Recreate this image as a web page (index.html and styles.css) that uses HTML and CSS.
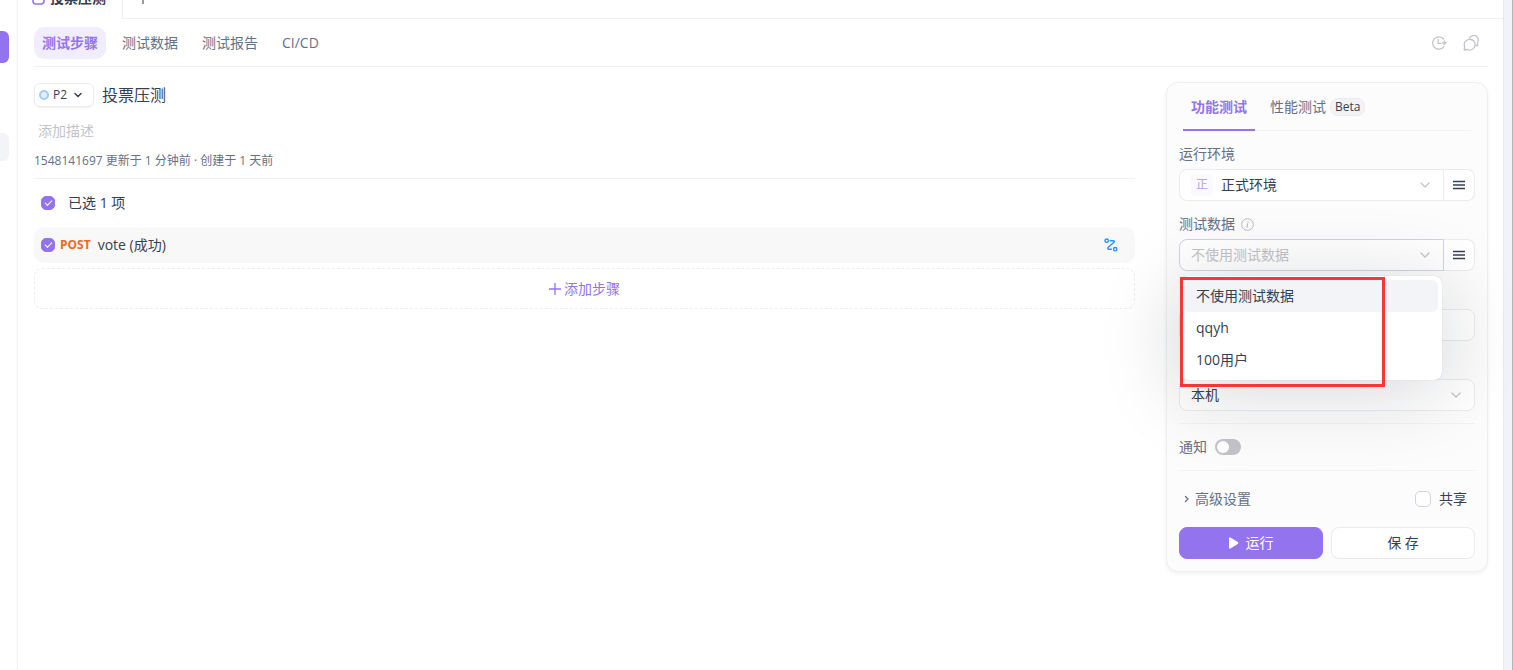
FILE: index.html
```html
<!DOCTYPE html>
<html lang="zh-CN">
<head>
    <meta charset="UTF-8">
    <meta name="viewport" content="width=device-width, initial-scale=1.0">
    <title>投票压测</title>
    <link rel="stylesheet" href="styles.css">
</head>
<body>
    <div class="app">
        <aside class="rail">
            <div class="rail-item active"></div>
            <div class="rail-item"></div>
        </aside>

        <div class="main">
            <div class="tabbar">
                <div class="file-tab">
                    <svg width="13" height="13" viewBox="0 0 13 13" fill="none" stroke="#9373ee" stroke-width="1.6"><rect x="1" y="1" width="11" height="11" rx="3"/></svg>
                    <span>投票压测</span>
                </div>
                <button class="new-tab" aria-label="新建">
                    <svg width="14" height="14" viewBox="0 0 14 14" stroke="#667085" stroke-width="1.4"><path d="M7 1v12M1 7h12"/></svg>
                </button>
            </div>

            <div class="content">
                <nav class="nav">
                    <a class="nav-link active" href="#steps">测试步骤</a>
                    <a class="nav-link" href="#data">测试数据</a>
                    <a class="nav-link" href="#report">测试报告</a>
                    <a class="nav-link" href="#cicd">CI/CD</a>
                    <div class="nav-tools">
                        <button class="icon-btn" aria-label="历史">
                            <svg width="16" height="16" viewBox="0 0 16 16" fill="none" stroke="#c3c4c9" stroke-width="1.3" stroke-linecap="round"><path d="M12.6 4A6.2 6.2 0 1 0 12.8 11.8"/><path d="M7.2 4.4v4h2.8"/><path d="M11.6 7.4h3.8l-1.9 2.4z" fill="#c3c4c9" stroke-width=".8" stroke-linejoin="round"/><path d="M13.5 6v1.6"/></svg>
                        </button>
                        <button class="icon-btn" aria-label="评论">
                            <svg width="16" height="16" viewBox="0 0 16 16" fill="none" stroke="#c3c4c9" stroke-width="1.3" stroke-linejoin="round" stroke-linecap="round"><path d="M1.2 15l.5-3.3a5.4 5.4 0 1 1 2.6 2.8z"/><path d="M6.6 3a4.6 4.6 0 1 1 7.8 4.8l.3 3-2.4-.4"/></svg>
                        </button>
                    </div>
                </nav>

                <div class="columns">
                    <section class="steps">
                        <div class="title-row">
                            <label class="priority">
                                <span class="priority-dot"></span>
                                <select aria-label="优先级"><option>P2</option></select>
                                <svg width="8" height="8" viewBox="0 0 8 8" fill="none" stroke="#344054" stroke-width="1.5" stroke-linecap="round" stroke-linejoin="round"><path d="M1 2.5l3 3 3-3"/></svg>
                            </label>
                            <h1>投票压测</h1>
                        </div>
                        <input class="desc" type="text" placeholder="添加描述" aria-label="描述">
                        <p class="meta">1548141697 更新于 1 分钟前 · 创建于 1 天前</p>

                        <label class="select-all">
                            <input class="check" type="checkbox" checked>
                            <span>已选 1 项</span>
                        </label>
                        <div class="step">
                            <input class="check" id="step1" type="checkbox" checked>
                            <span class="method">POST</span>
                            <label class="step-name" for="step1">vote (成功)</label>
                            <svg class="step-link" width="14" height="14" viewBox="0 0 14 14" fill="none" stroke="#2e90fa" stroke-width="1.4" stroke-linecap="round" stroke-linejoin="round"><circle cx="2.7" cy="2.7" r="1.7"/><circle cx="11.2" cy="11.2" r="1.7"/><path d="M6.2 2.7h3.2a.9.9 0 0 1 .6 1.6L4 9.6a.9.9 0 0 0 .6 1.6h2.8"/></svg>
                        </div>
                        <button class="add-step">
                            <svg width="12" height="12" viewBox="0 0 12 12" stroke="#9373ee" stroke-width="1.3"><path d="M6 0v12M0 6h12"/></svg>
                            <span>添加步骤</span>
                        </button>
                    </section>

                    <aside class="panel">
                        <div class="panel-tabs">
                            <button class="panel-tab active">功能测试</button>
                            <button class="panel-tab">性能测试<span class="beta">Beta</span></button>
                        </div>

                        <div class="field">
                            <label for="env">运行环境</label>
                            <div class="group">
                                <div class="picker">
                                    <span class="env-mark">正</span>
                                    <select id="env"><option>正式环境</option></select>
                                    <svg class="arrow" width="10" height="10" viewBox="0 0 10 10"><path d="M1 3l4 4 4-4"/></svg>
                                </div>
                                <button class="menu-btn" aria-label="管理环境">
                                    <svg width="12" height="10" viewBox="0 0 12 10" stroke="#344054" stroke-width="1.3"><path d="M0 1.5h12M0 5h12M0 8.5h12"/></svg>
                                </button>
                            </div>
                        </div>

                        <div class="field">
                            <label for="dataset">测试数据
                                <svg width="13" height="13" viewBox="0 0 13 13" fill="none" stroke="#b9bbc1"><circle cx="6.5" cy="6.5" r="5.8"/><path d="M6.6 5.4L6 9.6M7 3.2v1.2" stroke-width="1.2"/></svg>
                            </label>
                            <div class="group">
                                <div class="picker open">
                                    <select id="dataset"><option>不使用测试数据</option></select>
                                    <svg class="arrow" width="10" height="10" viewBox="0 0 10 10"><path d="M1 3l4 4 4-4"/></svg>
                                </div>
                                <button class="menu-btn" aria-label="管理数据">
                                    <svg width="12" height="10" viewBox="0 0 12 10" stroke="#344054" stroke-width="1.3"><path d="M0 1.5h12M0 5h12M0 8.5h12"/></svg>
                                </button>
                                <ul class="dropdown" role="listbox" aria-label="测试数据">
                                    <li class="option active" role="option">不使用测试数据</li>
                                    <li class="option" role="option">qqyh</li>
                                    <li class="option" role="option">100用户</li>
                                </ul>
                                <div class="marker"></div>
                            </div>
                        </div>

                        <div class="field unlabeled">
                            <div class="group">
                                <div class="picker"><input type="text" aria-label="循环次数"></div>
                            </div>
                        </div>

                        <div class="field unlabeled">
                            <div class="group">
                                <div class="picker">
                                    <select aria-label="运行于"><option>本机</option></select>
                                    <svg class="arrow" width="10" height="10" viewBox="0 0 10 10"><path d="M1 3l4 4 4-4"/></svg>
                                </div>
                            </div>
                        </div>

                        <div class="notify">
                            <label for="notify">通知</label>
                            <input class="switch" id="notify" type="checkbox">
                        </div>

                        <div class="advanced">
                            <button class="advanced-toggle">
                                <svg width="8" height="8" viewBox="0 0 8 8" fill="none" stroke="#667085" stroke-width="1.4" stroke-linecap="round" stroke-linejoin="round"><path d="M2.5 1.5L5 4 2.5 6.5"/></svg>
                                <span>高级设置</span>
                            </button>
                            <label class="share"><input class="check" type="checkbox">共享</label>
                        </div>

                        <div class="actions">
                            <button class="btn primary">
                                <svg width="10" height="12" viewBox="0 0 10 12" fill="#fff"><path d="M0 1.2C0 .4.8.1 1.4.5l7.4 4.6c.7.4.7 1.4 0 1.8l-7.4 4.6C.8 11.9 0 11.6 0 10.8z"/></svg>
                                <span>运行</span>
                            </button>
                            <button class="btn">保 存</button>
                        </div>
                    </aside>
                </div>
            </div>
        </div>

        <div class="gutter"></div>
    </div>
</body>
</html>
```

FILE: styles.css
```css
* {
    box-sizing: border-box;
}
body {
    margin: 0;
    font: 14px/22px "Open Sans", "Noto Sans CJK SC", sans-serif;
    color: #344054;
    background: #fff;
}
button, input, select {
    font: inherit;
    color: inherit;
    margin: 0;
    padding: 0;
    border: none;
    background: none;
    outline: none;
}
button, select {
    cursor: pointer;
}
select {
    appearance: none;
}
svg {
    flex: none;
}
.app {
    display: flex;
    height: 100vh;
    overflow: hidden;
}

/* left rail */
.rail {
    flex: none;
    width: 18px;
    padding-top: 31px;
    border-right: 1px solid #f1f2f5;
}
.rail-item {
    width: 9px;
    height: 28px;
    border-radius: 0 6px 6px 0;
    background: #f2f4f7;
}
.rail-item.active {
    height: 32px;
    margin-bottom: 70px;
    background: #9373ee;
}

/* main area, scrolled a little under the window top */
.main {
    flex: 1;
    min-width: 0;
    margin-top: -23px;
}
.tabbar {
    display: flex;
    height: 42px;
}
.file-tab {
    display: flex;
    align-items: center;
    gap: 5px;
    width: 105px;
    padding-left: 14px;
    font-weight: 600;
    border-right: 1px solid #edeef2;
}
.new-tab {
    flex: 1;
    display: flex;
    align-items: center;
    padding-left: 13px;
    border-bottom: 1px solid #f1f2f5;
}
.content {
    padding: 0 15px 0 16px;
}
.nav {
    display: flex;
    align-items: center;
    gap: 8px;
    height: 48px;
    border-bottom: 1px solid #f1f2f5;
}
.nav-link {
    padding: 5px 8px;
    border-radius: 10px;
    color: #667085;
    text-decoration: none;
}
.nav-link.active {
    color: #9373ee;
    font-weight: 600;
    background: #f2edfd;
}
.nav-tools {
    display: flex;
    gap: 16px;
    margin-left: auto;
    padding-right: 9px;
}
.icon-btn {
    display: flex;
}
.columns {
    display: flex;
    align-items: flex-start;
    gap: 31px;
    padding-top: 15px;
}

/* steps */
.steps {
    flex: 1;
    min-width: 0;
}
.title-row {
    display: flex;
    align-items: center;
    gap: 8px;
    margin-top: 1px;
}
.priority {
    display: flex;
    align-items: center;
    width: 60px;
    height: 24px;
    padding-left: 4px;
    font-size: 12px;
    border: 1px solid #eaecf0;
    border-radius: 6px;
    box-shadow: 0 1px 2px rgba(16, 24, 40, 0.06);
}
.priority-dot {
    width: 10px;
    height: 10px;
    margin-right: 4px;
    border: 2px solid #a3cbfb;
    border-radius: 50%;
    background: #e3effd;
}
.priority select {
    width: 21px;
}
h1 {
    margin: 0;
    font-size: 16px;
    line-height: 24px;
    font-weight: 400;
}
.desc {
    display: block;
    width: 100%;
    height: 32px;
    margin-top: 7px;
    padding: 0 4px;
}
.desc::placeholder {
    color: #c3c4c9;
    opacity: 1;
}
.meta {
    margin: 0;
    padding: 5px 0 7px;
    font-size: 12px;
    line-height: 20px;
    color: #667085;
    border-bottom: 1px solid #f1f2f5;
}
.check {
    appearance: none;
    position: relative;
    flex: none;
    width: 14px;
    height: 14px;
    border: 1px solid #d0d5dd;
    border-radius: 5px;
    background: #fff;
}
.check:checked {
    border-color: #9373ee;
    background: #9373ee;
}
.check:checked::before {
    content: "";
    position: absolute;
    left: 3px;
    top: 3px;
    width: 6px;
    height: 3px;
    border: solid #fff;
    border-width: 0 0 1px 1px;
    transform: rotate(-45deg);
}
.select-all {
    display: flex;
    align-items: center;
    gap: 13px;
    height: 48px;
    padding-left: 7px;
}
.step {
    display: flex;
    align-items: center;
    height: 36px;
    padding: 0 17px 0 7px;
    border-radius: 10px;
    background: #f8f8f8;
}
.method {
    margin-left: 5px;
    font-size: 12px;
    font-weight: 700;
    color: #ef6820;
}
.step-name {
    margin-left: 7px;
}
.step-link {
    margin-left: auto;
}
.add-step {
    display: flex;
    align-items: center;
    justify-content: center;
    gap: 3px;
    width: 100%;
    height: 41px;
    margin-top: 5px;
    color: #9373ee;
    border: 1px dashed #eeeef0;
    border-radius: 8px;
}

/* run panel */
.panel {
    flex: none;
    width: 322px;
    padding: 0 12px 12px;
    border: 1px solid #eeeff2;
    border-radius: 12px;
    background: #fcfcfc;
    box-shadow: 0 2px 4px rgba(16, 24, 40, 0.05);
}
.panel-tabs {
    display: flex;
    gap: 7px;
    height: 48px;
    margin: 0 4px;
    box-shadow: inset 0 -1px #f1f2f5;
}
.panel-tab {
    display: flex;
    align-items: center;
    gap: 4px;
    padding: 2px 8px 0;
    color: #667085;
    border-bottom: 2px solid transparent;
}
.panel-tab.active {
    color: #9373ee;
    font-weight: 600;
    border-bottom-color: #9373ee;
}
.beta {
    padding: 0 4px;
    font-size: 12px;
    line-height: 16px;
    color: #344054;
    border: 1px solid #ebecef;
    border-radius: 8px;
    background: #f3f3f5;
}
.field label {
    display: flex;
    align-items: center;
    gap: 6px;
    padding: 12px 0 4px;
    color: #667085;
}
.field.unlabeled {
    padding-top: 38px;
}
.group {
    position: relative;
    display: flex;
    height: 32px;
}
.picker {
    flex: 1;
    min-width: 0;
    display: flex;
    align-items: center;
    padding: 0 13px 0 11px;
    border: 1px solid #eaebee;
    border-radius: 8px;
    background: #fff;
}
.picker:not(:last-child) {
    border-radius: 8px 0 0 8px;
}
.picker select, .picker input {
    flex: 1;
    min-width: 0;
    height: 30px;
}
.picker.open {
    border-color: #d0d5dd;
    color: #c3c4c9;
}
.arrow {
    fill: none;
    stroke: #c3c4c9;
    stroke-width: 1.3;
    stroke-linecap: round;
    stroke-linejoin: round;
}
.env-mark {
    width: 22px;
    margin-right: 8px;
    font-size: 12px;
    text-align: center;
    color: #b7a3f3;
    border-radius: 4px;
    background: #faf9fe;
}
.menu-btn {
    display: flex;
    align-items: center;
    justify-content: center;
    width: 31px;
    border: solid #eaebee;
    border-width: 1px 1px 1px 0;
    border-radius: 0 8px 8px 0;
    background: #fff;
}
.dropdown {
    position: absolute;
    z-index: 2;
    top: 37px;
    left: 1px;
    right: 33px;
    margin: 0;
    padding: 4px;
    list-style: none;
    border-radius: 8px;
    background: #fff;
    box-shadow: 0 0 1px rgba(16, 24, 40, 0.2), 0 10px 80px rgba(16, 24, 40, 0.18);
}
.option {
    padding: 5px 12px;
    border-radius: 6px;
}
.option.active {
    background: #f2f4f7;
}
.marker {
    position: absolute;
    z-index: 3;
    top: 38px;
    left: 1px;
    width: 205px;
    height: 110px;
    border: 3px solid #fb3434;
    pointer-events: none;
}
.notify {
    display: flex;
    align-items: center;
    gap: 8px;
    height: 48px;
    margin-top: 12px;
    color: #667085;
    border: solid #f1f2f5;
    border-width: 1px 0;
}
.switch {
    appearance: none;
    width: 26px;
    height: 16px;
    padding: 2px;
    border-radius: 8px;
    background: #c3c4c9;
}
.switch::before {
    content: "";
    display: block;
    width: 12px;
    height: 12px;
    border-radius: 50%;
    background: #fff;
}
.advanced {
    display: flex;
    align-items: center;
    justify-content: space-between;
    height: 56px;
    padding: 0 8px 0 4px;
}
.advanced-toggle {
    display: flex;
    align-items: center;
    gap: 4px;
    color: #667085;
}
.share {
    display: flex;
    align-items: center;
    gap: 8px;
}
.share .check {
    width: 16px;
    height: 16px;
}
.actions {
    display: flex;
    gap: 8px;
}
.btn {
    flex: 1;
    display: flex;
    align-items: center;
    justify-content: center;
    gap: 7px;
    height: 32px;
    border: 1px solid #eaebee;
    border-radius: 8px;
    background: #fff;
}
.btn.primary {
    color: #fff;
    border-color: #9373ee;
    background: #9373ee;
}

.gutter {
    flex: none;
    width: 10px;
    border: solid #e8e9ee;
    border-width: 0 1px;
    border-right-color: #b4b5ba;
    background: #f2f3f8;
}
```
